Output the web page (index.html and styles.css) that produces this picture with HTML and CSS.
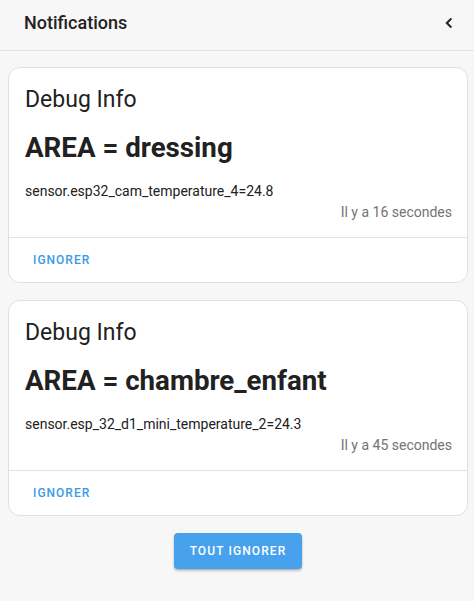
FILE: index.html
```html
<!DOCTYPE html>
<html lang="fr">
<head>
<meta charset="utf-8">
<title>Notifications</title>
<link rel="stylesheet" href="styles.css">
</head>
<body>
<div class="drawer">
  <header class="header">
    <h1 class="header-title">Notifications</h1>
    <button class="icon-btn" aria-label="Fermer">
      <svg viewBox="0 0 24 24" width="20" height="20"><path d="M15.41,16.58L10.83,12L15.41,7.41L14,6L8,12L14,18L15.41,16.58Z" fill="#212121" stroke="#212121" stroke-width="0.6"/></svg>
    </button>
  </header>
  <main class="list">
    <section class="card">
      <div class="card-body">
        <div class="card-title">Debug Info</div>
        <div class="area">AREA = dressing</div>
        <div class="entity">sensor.esp32_cam_temperature_4=24.8</div>
        <div class="time">Il y a 16 secondes</div>
      </div>
      <div class="card-actions">
        <button class="text-btn">IGNORER</button>
      </div>
    </section>
    <section class="card">
      <div class="card-body">
        <div class="card-title">Debug Info</div>
        <div class="area">AREA = chambre_enfant</div>
        <div class="entity">sensor.esp_32_d1_mini_temperature_2=24.3</div>
        <div class="time">Il y a 45 secondes</div>
      </div>
      <div class="card-actions">
        <button class="text-btn">IGNORER</button>
      </div>
    </section>
    <div class="footer">
      <button class="raised-btn">TOUT IGNORER</button>
    </div>
  </main>
</div>
</body>
</html>
```

FILE: styles.css
```css
* { box-sizing: border-box; }
html, body {
  margin: 0;
  padding: 0;
  background: #f7f7f7;
  font-family: Roboto, "Liberation Sans", sans-serif;
  color: #212121;
}
.drawer {
  width: 474px;
  min-height: 601px;
  background: #f7f7f7;
}
.header {
  height: 51px;
  display: flex;
  align-items: center;
  justify-content: space-between;
  padding: 0 15px 5px 24px;
  border-bottom: 1px solid #e2e2e2;
}
.header-title {
  margin: 0;
  font-size: 18px;
  font-weight: 500;
  line-height: 24px;
}
.icon-btn {
  border: 0;
  background: none;
  padding: 0;
  width: 20px;
  height: 20px;
  display: flex;
}
.list {
  padding: 16px 6px 0 8px;
  display: flex;
  flex-direction: column;
  gap: 17px;
}
.card {
  background: #fff;
  border: 1px solid #e0e0e0;
  border-radius: 12px;
}
.card-body {
  padding: 16px 15px 15px 16px;
  display: flex;
  flex-direction: column;
}
.card-title {
  font-size: 23px;
  line-height: 32px;
  font-weight: 400;
}
.area {
  margin-top: 14px;
  font-size: 27.7px;
  line-height: 36px;
  font-weight: 700;
}
.entity {
  margin-top: 15px;
  font-size: 14px;
  line-height: 20px;
}
.time {
  margin-top: 1px;
  font-size: 14px;
  line-height: 20px;
  color: #737373;
  text-align: right;
}
.card-actions {
  border-top: 1px solid #e3e3e3;
  height: 45px;
  padding: 4px 16px;
  display: flex;
  align-items: center;
}
.text-btn {
  border: 0;
  background: none;
  height: 36px;
  padding: 0 8px;
  font-family: Roboto, "Liberation Sans", sans-serif;
  font-size: 12px;
  font-weight: 500;
  letter-spacing: 1px;
  color: #3d99e6;
}
.footer {
  display: flex;
  justify-content: center;
  padding-bottom: 16px;
}
.raised-btn {
  border: 0;
  height: 36px;
  padding: 0 16px;
  border-radius: 4px;
  background: #47a1ed;
  color: #fff;
  font-family: Roboto, "Liberation Sans", sans-serif;
  font-size: 12px;
  font-weight: 500;
  letter-spacing: 1.1px;
  box-shadow: 0 2px 3px rgba(0,0,0,0.2), 0 1px 1px rgba(0,0,0,0.12);
}
```
